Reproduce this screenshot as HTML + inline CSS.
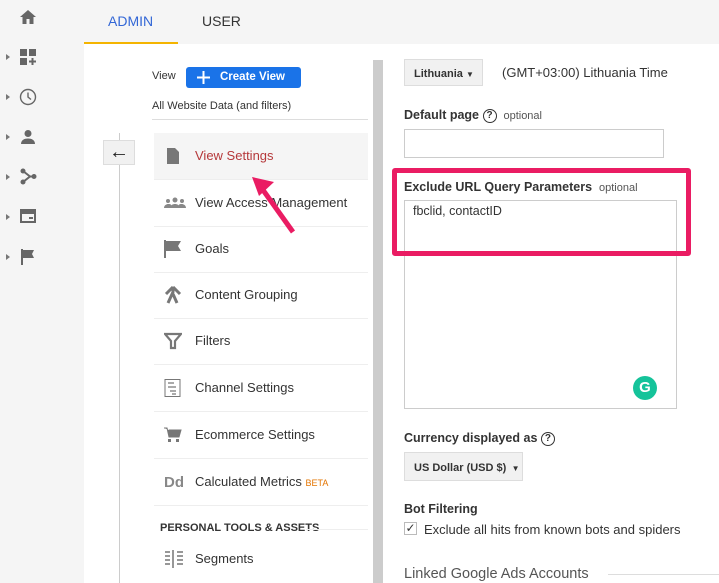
<!DOCTYPE html>
<html><head><style>
*{margin:0;padding:0;box-sizing:border-box}
body{width:719px;height:583px;overflow:hidden;background:#f5f5f5;font-family:"Liberation Sans",sans-serif;color:#333;position:relative;font-size:13px}
.a{position:absolute}
.side{left:0;top:0;width:50px;height:583px;background:#f5f5f5}
.tri{width:0;height:0;border-top:3px solid transparent;border-bottom:3px solid transparent;border-left:4px solid #777;left:6px}
.main{left:84px;top:44px;width:635px;height:539px;background:#fff}
.item{left:154px;width:214px;height:47px;border-bottom:1px solid #eee;font-size:13px;color:#333}
.item span{position:absolute;left:41px;top:15px}
.item i{position:absolute;left:10px;top:14px;width:18px;height:18px;font-style:normal}
.lbl{font-weight:bold;font-size:12.5px;color:#333}
.opt{font-size:11px;color:#555;font-weight:normal}
.q{display:inline-block;width:14px;height:14px;border:1.3px solid #333;border-radius:50%;font-size:10px;text-align:center;line-height:12px;font-weight:bold;vertical-align:middle}
.inp{border:1px solid #ccc;background:#fff}
.sel{background:#f1f1f1;border:1px solid #ddd;font-size:11px;font-weight:bold;color:#333}
</style></head><body>
<div class="a side"></div>
<svg class="a" style="left:18px;top:8px" width="20" height="18" viewBox="0 0 20 18"><path d="M10 2L2 9h2.5v7h4v-5h3v5h4V9H18z" fill="#666"/></svg>
<div class="a tri" style="top:54px"></div>
<svg class="a" style="left:20px;top:49px" width="16" height="16"><rect x="0" y="0" width="7" height="7" fill="#666"/><rect x="9" y="0" width="7" height="7" fill="#666"/><rect x="0" y="9" width="7" height="7" fill="#666"/><path d="M12.5 9v7M9 12.5h7" stroke="#666" stroke-width="2"/></svg>
<div class="a tri" style="top:94px"></div>
<svg class="a" style="left:19px;top:88px" width="18" height="18"><circle cx="9" cy="9" r="7.5" fill="none" stroke="#666" stroke-width="1.4"/><path d="M9 4.5V9l3 2.5" stroke="#666" stroke-width="1.4" fill="none"/></svg>
<div class="a tri" style="top:134px"></div>
<svg class="a" style="left:20px;top:129px" width="16" height="16"><circle cx="8" cy="4.5" r="3.5" fill="#666"/><path d="M1 15c0-4 3.5-5.5 7-5.5s7 1.5 7 5.5z" fill="#666"/></svg>
<div class="a tri" style="top:174px"></div>
<svg class="a" style="left:20px;top:168px" width="17" height="17"><path d="M3 3l7 5.5L3 14M10 8.5h4" stroke="#666" stroke-width="2" fill="none"/><circle cx="3" cy="3" r="2.5" fill="#666"/><circle cx="3" cy="14" r="2.5" fill="#666"/><circle cx="14" cy="8.5" r="2.5" fill="#666"/></svg>
<div class="a tri" style="top:214px"></div>
<svg class="a" style="left:20px;top:209px" width="16" height="14"><rect x="1" y="1" width="14" height="12" fill="none" stroke="#666" stroke-width="2"/><rect x="1" y="1" width="14" height="4" fill="#666"/><rect x="9" y="8" width="4" height="2" fill="#666"/></svg>
<div class="a tri" style="top:254px"></div>
<svg class="a" style="left:21px;top:249px" width="14" height="16"><path d="M1 0v16" stroke="#666" stroke-width="2"/><path d="M2 1h11l-2 4 2 4H2z" fill="#666"/></svg>

<div class="a" style="left:108px;top:13px;font-size:14px;color:#3367d6">ADMIN</div>
<div class="a" style="left:84px;top:42px;width:94px;height:3px;background:#f4b400"></div>
<div class="a" style="left:202px;top:13px;font-size:14px;color:#333">USER</div>

<div class="a main"></div>
<div class="a" style="left:119px;top:133px;width:1px;height:450px;background:#ccc"></div>
<div class="a" style="left:373px;top:60px;width:10px;height:523px;background:#ccc"></div>

<div class="a" style="left:152px;top:70px;font-size:11px;color:#333">View</div>
<div class="a" style="left:186px;top:67px;width:115px;height:21px;background:#1a73e8;border-radius:3px;color:#fff;font-size:11.5px;font-weight:bold;"><svg style="position:absolute;left:11px;top:4px" width="13" height="13"><path d="M6.5 0v13M0 6.5h13" stroke="#fff" stroke-width="2"/></svg><span style="position:absolute;left:34px;top:4px">Create View</span></div>
<div class="a" style="left:152px;top:100px;font-size:11px;color:#333">All Website Data (and filters)</div>
<div class="a" style="left:152px;top:119px;width:216px;height:1px;background:#ddd"></div>

<div class="a" style="left:103px;top:140px;width:32px;height:25px;background:#f1f1f1;border:1px solid #ddd;font-size:20px;text-align:center;line-height:22px;color:#222">←</div>

<div class="a item" style="top:133px;background:#f5f5f5"><i><svg width="18" height="18"><path d="M3 1h8l4 4v12H3z" fill="#777"/></svg></i><span style="color:#b5383a">View Settings</span></div>
<div class="a item" style="top:180px"><i><svg width="22" height="18"><circle cx="11" cy="6" r="2.5" fill="#888"/><circle cx="4" cy="7" r="2" fill="#888"/><circle cx="18" cy="7" r="2" fill="#888"/><path d="M0 14c0-3 3-4 4-4s3 0 3 1v3zM6 14c0-3 3-4 5-4s5 1 5 4zM15 14v-3c0-1 2-1 3-1s4 1 4 4z" fill="#888"/></svg></i><span>View Access Management</span></div>
<div class="a item" style="top:226px"><i><svg width="18" height="18"><path d="M1 0v18" stroke="#777" stroke-width="2"/><path d="M2 1h15l-3 5 3 5H2z" fill="#777"/></svg></i><span>Goals</span></div>
<div class="a item" style="top:272px"><i><svg width="18" height="18"><path d="M9 1L2 8M9 1l7 7M9 1v5L4 17M9 8l4 9" stroke="#777" stroke-width="3" fill="none"/></svg></i><span>Content Grouping</span></div>
<div class="a item" style="top:318px"><i><svg width="18" height="18"><path d="M1 2h16l-6 7v7h-4V9z" fill="none" stroke="#777" stroke-width="2.2"/></svg></i><span>Filters</span></div>
<div class="a item" style="top:365px"><i><svg width="18" height="18"><rect x="1" y="0.5" width="15" height="17" fill="none" stroke="#777"/><path d="M4 4h6M4 8h8M6 12h6M8 15h4" stroke="#777" stroke-width="1.3"/></svg></i><span>Channel Settings</span></div>
<div class="a item" style="top:412px"><i><svg width="18" height="18"><path d="M0 2h3l2 9h10l2-7H5" fill="#777" stroke="#777"/><rect x="4" y="13" width="3" height="3" fill="#777"/><rect x="12" y="13" width="3" height="3" fill="#777"/></svg></i><span>Ecommerce Settings</span></div>
<div class="a item" style="top:459px"><i style="font-weight:bold;color:#888;font-size:15px;top:15px;left:10px">Dd</i><span>Calculated Metrics <b style="font-size:9px;color:#e37400;font-weight:normal">BETA</b></span></div>
<div class="a" style="left:160px;top:522px;font-size:11px;font-weight:bold;color:#333">PERSONAL TOOLS &amp; ASSETS</div>
<div class="a" style="left:306px;top:529px;width:62px;height:1px;background:#eee"></div>
<div class="a item" style="top:536px;border:none"><i><svg width="20" height="18"><path d="M1 2h5M1 6h5M1 10h5M1 14h5M13 2h6M13 6h6M13 10h6M13 14h6M9 0v18" stroke="#777" stroke-width="1.5"/></svg></i><span>Segments</span></div>

<div class="a sel" style="left:404px;top:59px;width:79px;height:27px;padding:8px 0 0 9px">Lithuania <span style="font-size:8px">▼</span></div>
<div class="a" style="left:502px;top:65px;font-size:13px">(GMT+03:00) Lithuania Time</div>
<div class="a lbl" style="left:404px;top:108px">Default page <span class="q">?</span> &nbsp;<span class="opt">optional</span></div>
<div class="a inp" style="left:404px;top:129px;width:260px;height:29px"></div>

<div class="a inp" style="left:404px;top:200px;width:273px;height:209px"></div>
<div class="a" style="left:392px;top:168px;width:299px;height:88px;border:5px solid #ea1c63;border-radius:3px"></div>
<div class="a lbl" style="left:404px;top:180px">Exclude URL Query Parameters &nbsp;<span class="opt">optional</span></div>
<div class="a" style="left:413px;top:204px;font-size:12.5px">fbclid, contactID</div>
<div class="a" style="left:633px;top:376px;width:24px;height:24px;border-radius:50%;background:#15c39a;color:#fff;font-weight:bold;font-size:15px;text-align:center;line-height:24px">G</div>

<div class="a lbl" style="left:404px;top:431px">Currency displayed as <span class="q">?</span></div>
<div class="a sel" style="left:404px;top:452px;width:119px;height:29px;padding:9px 0 0 9px">US Dollar (USD $) <span style="font-size:8px">&nbsp;▼</span></div>
<div class="a lbl" style="left:404px;top:502px">Bot Filtering</div>
<div class="a" style="left:404px;top:522px;width:13px;height:13px;border:1px solid #bbb;background:#fff;font-size:12px;line-height:11px;text-align:center;color:#333">✓</div>
<div class="a" style="left:424px;top:522px;font-size:13px">Exclude all hits from known bots and spiders</div>
<div class="a" style="left:404px;top:566px;font-size:14.5px;color:#555">Linked Google Ads Accounts</div>
<div class="a" style="left:608px;top:574px;width:111px;height:1px;background:#ddd"></div>

<svg class="a" style="left:245px;top:172px" width="55" height="66"><path d="M48 60L18 18" stroke="#ea1c63" stroke-width="5"/><path d="M7 5l22 5-15 14z" fill="#ea1c63"/></svg>
</body></html>
